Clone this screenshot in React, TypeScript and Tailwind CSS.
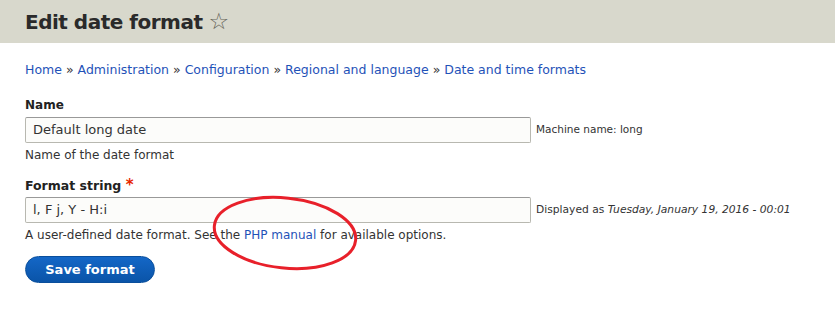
export default function App() {
  const font = { fontFamily: '"DejaVu Sans", "Lucida Grande", Verdana, sans-serif' };
  return (
    <div className="relative w-[835px] h-[323px] bg-white text-[#333]" style={font}>
      <div className="h-[43px] bg-[#d8d8cc] flex items-center pl-[25px]">
        <h1 className="text-[20px] font-bold text-[#2a2a2a] leading-none tracking-[-0.5px]">Edit date format</h1>
        <span className="ml-[6px] text-[23px] text-[#66665a] leading-none">☆</span>
      </div>
      <div className="pl-[25px] pt-[19px] text-[12.5px] leading-[16px] text-[#1f52b8]">
        <span>Home</span> <span className="text-[#333]">»</span> <span>Administration</span> <span className="text-[#333]">»</span> <span>Configuration</span> <span className="text-[#333]">»</span> <span>Regional and language</span> <span className="text-[#333]">»</span> <span>Date and time formats</span>
      </div>
      <div className="pl-[25px] pt-[20px]">
        <div className="text-[12px] font-bold leading-[15px] text-[#222]">Name</div>
        <div className="flex items-center mt-[4px]">
          <div className="w-[506px] h-[26px] border border-[#b8b8b0] border-t-[#999] rounded-[2px] bg-[#fcfcfa] flex items-center px-[7px] text-[13px] text-[#333]">Default long date</div>
          <span className="ml-[5px] text-[10.5px] text-[#333]">Machine name: long</span>
        </div>
        <div className="mt-[5px] text-[12px] leading-[15px] text-[#333]">Name of the date format</div>
        <div className="mt-[15px] text-[12.5px] font-bold leading-[15px] text-[#222]">Format string <span className="text-[#e62600] text-[15px]">*</span></div>
        <div className="flex items-center mt-[4px]">
          <div className="w-[506px] h-[26px] border border-[#b8b8b0] border-t-[#999] rounded-[2px] bg-[#fcfcfa] flex items-center px-[7px] text-[13px] text-[#333]">l, F j, Y - H:i</div>
          <span className="ml-[5px] text-[10.7px] text-[#333]">Displayed as <em>Tuesday, January 19, 2016 - 00:01</em></span>
        </div>
        <div className="mt-[5px] text-[12px] leading-[15px] text-[#333]">A user-defined date format. See the <span className="text-[#1f52b8]">PHP manual</span> for available options.</div>
        <button className="mt-[13px] w-[130px] h-[27px] rounded-full bg-gradient-to-b from-[#1467c7] to-[#0a54a8] border border-[#0a4f9c] text-white text-[13px] font-bold leading-none">Save format</button>
      </div>
      <svg className="absolute left-[205px] top-[190px]" width="160" height="86" viewBox="0 0 160 86">
        <ellipse cx="80" cy="43" rx="71" ry="35" fill="none" stroke="#e8202a" strokeWidth="3" transform="rotate(6 80 43)" />
      </svg>
    </div>
  );
}
